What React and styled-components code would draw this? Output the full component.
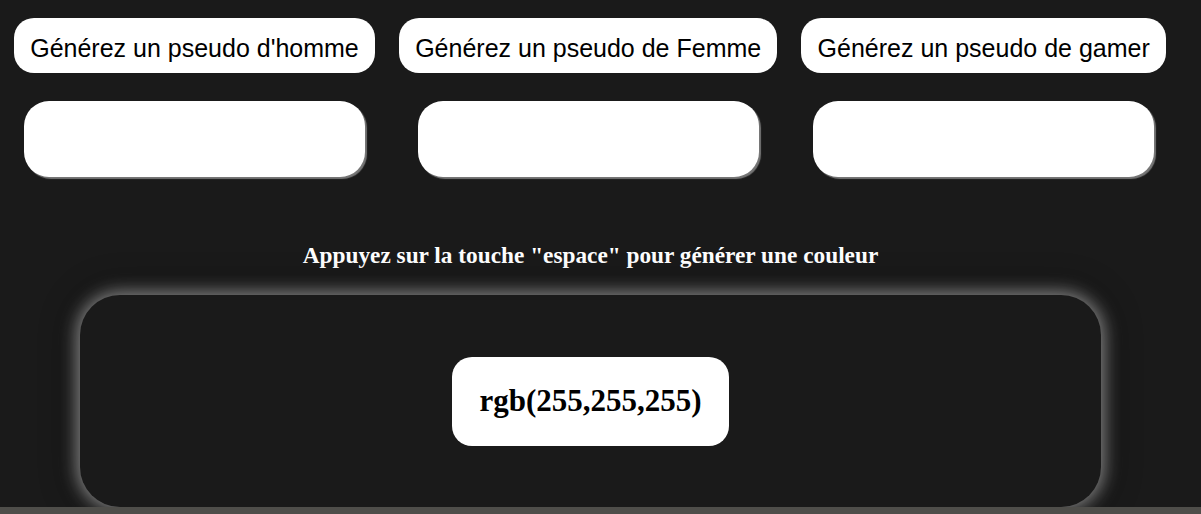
import React from "react";
import styled, { createGlobalStyle } from "styled-components";

const Global = createGlobalStyle`
  html { background: #4f4e4a; }
  body {
    margin: 0;
    background: #1a1a1a;
    font-family: "Liberation Sans", Arial, sans-serif;
  }
`;

const Page = styled.div`
  display: flex;
  flex-direction: column;
`;

const Generators = styled.div`
  display: flex;
  align-items: flex-start;
  gap: 24px;
  padding: 18px 0 0 14px;
`;

const Column = styled.div`
  display: flex;
  flex-direction: column;
  align-items: center;
  gap: 28px;
`;

const GenButton = styled.button`
  font-family: "Liberation Sans", Arial, sans-serif;
  font-size: 25px;
  line-height: 29px;
  color: #000;
  background: #fff;
  border: none;
  border-radius: 20px;
  padding: 15.5px 16.2px 10.5px;
  white-space: nowrap;
  cursor: pointer;
`;

const Output = styled.input`
  width: 341px;
  height: 76px;
  box-sizing: border-box;
  border: none;
  border-radius: 25px;
  background: #fff;
  box-shadow: 2px 2px 1px #767676;
  outline: none;
  padding: 0 20px;
  font-family: "Liberation Sans", Arial, sans-serif;
  font-size: 22px;
`;

const ColorSection = styled.section`
  margin: 0 100px 0 80px;
  display: flex;
  flex-direction: column;
`;

const Hint = styled.h2`
  margin: 65px 0 0;
  font-family: "Liberation Serif", "Times New Roman", serif;
  font-weight: bold;
  font-size: 23.3px;
  line-height: 27px;
  color: #fff;
  text-align: center;
`;

const Panel = styled.div`
  margin-top: 26px;
  height: 212px;
  border-radius: 40px;
  background: #1a1a1a;
  box-shadow: 0 0 18px 3px rgba(255, 255, 255, 0.5),
    0 0 30px 12px rgba(0, 0, 0, 0.3);
  display: flex;
  align-items: center;
  justify-content: center;
`;

const ColorValue = styled.div`
  height: 89px;
  box-sizing: border-box;
  padding: 0 27px;
  display: flex;
  align-items: center;
  background: #fff;
  border-radius: 20px;
  font-family: "Liberation Serif", "Times New Roman", serif;
  font-weight: bold;
  font-size: 31px;
  color: #000;
`;

const generators = [
  "Générez un pseudo d'homme",
  "Générez un pseudo de Femme",
  "Générez un pseudo de gamer",
];

export default function App() {
  return (
    <>
      <Global />
      <Page>
        <Generators>
          {generators.map((label) => (
            <Column key={label}>
              <GenButton>{label}</GenButton>
              <Output readOnly value="" />
            </Column>
          ))}
        </Generators>
        <ColorSection>
          <Hint>Appuyez sur la touche "espace" pour générer une couleur</Hint>
          <Panel>
            <ColorValue>rgb(255,255,255)</ColorValue>
          </Panel>
        </ColorSection>
      </Page>
    </>
  );
}
